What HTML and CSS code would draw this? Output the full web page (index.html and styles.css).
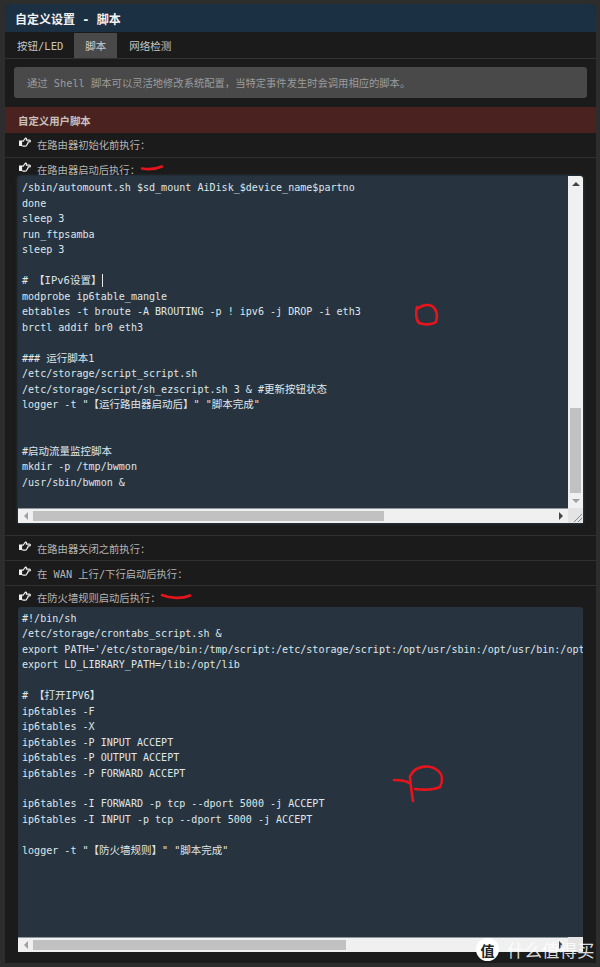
FILE: index.html
```html
<!DOCTYPE html>
<html lang="zh-CN">
<head>
<meta charset="utf-8">
<title>自定义设置 - 脚本</title>
<link rel="stylesheet" href="styles.css">
</head>
<body>
<main class="panel">
  <header class="panel-head">自定义设置 - 脚本</header>
  <nav class="tabs">
    <a class="tab tab-first">按钮/LED</a>
    <a class="tab tab-active">脚本</a>
    <a class="tab">网络检测</a>
  </nav>
  <div class="alert-wrap">
    <div class="alert">通过 Shell 脚本可以灵活地修改系统配置，当特定事件发生时会调用相应的脚本。</div>
  </div>
  <div class="section-title">自定义用户脚本</div>

  <div class="row row-first">
    <div class="label"><svg class="hand"><use href="#hand"/></svg>在路由器初始化前执行：</div>
  </div>

  <div class="row row-open row-open-a">
    <div class="label"><svg class="hand"><use href="#hand"/></svg>在路由器启动后执行：</div>
    <div class="editor editor-a">
      <pre class="code">/sbin/automount.sh $sd_mount AiDisk_$device_name$partno
done
sleep 3
run_ftpsamba
sleep 3

# <span class="zh">【IPv6设置】</span><span class="caret"></span>
modprobe ip6table_mangle
ebtables -t broute -A BROUTING -p ! ipv6 -j DROP -i eth3
brctl addif br0 eth3

### <span class="zh">运行脚本</span>1
/etc/storage/script_script.sh
/etc/storage/script/sh_ezscript.sh 3 &amp; #<span class="zh">更新按钮状态</span>
logger -t "<span class="zh">【运行路由器启动后】</span>" "<span class="zh">脚本完成</span>"


#<span class="zh">启动流量监控脚本</span>
mkdir -p /tmp/bwmon
/usr/sbin/bwmon &amp;</pre>
      <div class="vbar">
        <span class="arrow arrow-up"></span>
        <div class="vtrack"><span class="vthumb"></span></div>
        <span class="arrow arrow-down"></span>
      </div>
      <div class="hbar">
        <span class="arrow arrow-left"></span>
        <div class="htrack"><span class="hthumb hthumb-a"></span></div>
        <span class="arrow arrow-right"></span>
      </div>
      <div class="corner"><svg class="grip" viewBox="0 0 10 10"><path d="M1 9 9 1M5 9 9 5"/></svg></div>
    </div>
  </div>

  <div class="row">
    <div class="label"><svg class="hand"><use href="#hand"/></svg>在路由器关闭之前执行：</div>
  </div>
  <div class="row">
    <div class="label"><svg class="hand"><use href="#hand"/></svg>在 WAN 上行/下行启动后执行：</div>
  </div>

  <div class="row row-open row-open-b">
    <div class="label"><svg class="hand"><use href="#hand"/></svg>在防火墙规则启动后执行：</div>
    <div class="editor editor-b">
      <pre class="code code-wide">#!/bin/sh
/etc/storage/crontabs_script.sh &amp;
export PATH='/etc/storage/bin:/tmp/script:/etc/storage/script:/opt/usr/sbin:/opt/usr/bin:/opt
export LD_LIBRARY_PATH=/lib:/opt/lib

# <span class="zh">【打开</span>IPV6<span class="zh">】</span>
ip6tables -F
ip6tables -X
ip6tables -P INPUT ACCEPT
ip6tables -P OUTPUT ACCEPT
ip6tables -P FORWARD ACCEPT

ip6tables -I FORWARD -p tcp --dport 5000 -j ACCEPT
ip6tables -I INPUT -p tcp --dport 5000 -j ACCEPT

logger -t "<span class="zh">【防火墙规则】</span>" "<span class="zh">脚本完成</span>"</pre>
      <div class="hbar">
        <span class="arrow arrow-left"></span>
        <div class="htrack"><span class="hthumb hthumb-b"></span></div>
        <span class="arrow arrow-right"></span>
      </div>
      <div class="corner"></div>
    </div>
  </div>
</main>

<svg class="defs" aria-hidden="true">
  <symbol id="hand" viewBox="0 0 12 10">
    <path d="M0 3.500h2.500v5.500H0z" fill="#efefef"/>
    <path d="M2.500 4.200H4C5 3.300 5.600 1.700 6.600 1.100c1.100 0 1.100 1.200.6 2h3.300c1.200 0 1.200 1.800 0 1.800H9c.3.800 0 1.500-.5 1.700 0 .8-.3 1.300-.9 1.500 0 .7-.5 1.100-1.100 1.100H4.300c-.6 0-1.200-.5-1.800-.7z" fill="#1b1b1b" stroke="#efefef" stroke-width="1.200" stroke-linejoin="round"/>
  </symbol>
</svg>

<svg class="mark mark-dash-a" viewBox="0 0 24 6"><path d="M2 3.500c6 1 13 1 20-2"/></svg>
<svg class="mark mark-dash-b" viewBox="0 0 32 8"><path d="M2 2c8 3.500 20 4 28 .5"/></svg>
<svg class="mark mark-o" viewBox="0 0 26 24"><path d="M3 4C1.500 9 2 17 5 20c5 2 13 2 17-1 2-6 1-13-4-16C13 1 8 2 3 6"/></svg>
<svg class="mark mark-p" viewBox="0 0 54 40"><path d="M1 17c5 0 11 0 15 3M17 13c0 7 2 17 3 25M18 12C22 3 36 1 44 7c6 4 6 11 3 17-7 3-17 3-25 2"/></svg>

<div class="watermark">
  <span class="wm-logo">值</span>
  <span class="wm-text">什么值得买</span>
</div>
</body>
</html>
```
FILE: styles.css
```css
* { box-sizing: border-box; }
html, body { margin: 0; height: 967px; overflow: hidden; }
body {
  position: relative;
  background: #2d2d2d;
  padding: 4px 4px 0 5px;
  font-family: "DejaVu Sans Mono", "Noto Sans CJK SC", monospace;
  font-size: 10px;
  color: #b5b5b5;
}
.panel { background: #1b1b1b; border-radius: 6px 6px 0 0; height: 959px; }
.panel-head {
  height: 28px;
  background: #1c3044;
  border-radius: 6px 6px 0 0;
  padding: 0 10px;
  display: flex;
  align-items: center;
  color: #f2f2f2;
  font-weight: 700;
  font-size: 12px;
  white-space: pre;
}
.tabs {
  height: 27px;
  display: flex;
  padding: 1px 0 0 0;
  border-bottom: 1px solid #333;
  font-size: 10.5px;
}
.tab {
  display: flex;
  align-items: center;
  padding: 0 12px;
  color: #c4c4c4;
}
.tab-first { padding-right: 11px; }
.tab-active { background: #494949; padding: 0 11px; color: #d0d0d0; }
.alert-wrap { padding: 8px 9px 9px; }
.alert {
  height: 31px;
  background: #494949;
  border-radius: 3px;
  padding: 0 13px;
  display: flex;
  align-items: center;
  color: #9c9c9c;
  font-size: 10.3px;
  white-space: pre;
}
.section-title {
  height: 26px;
  background: #4a2320;
  padding: 0 13px;
  display: flex;
  align-items: center;
  font-weight: 700;
  font-size: 10.4px;
  color: #c9c0bd;
}
.row { border-bottom: 1px solid #303030; height: 25px; padding: 0 14px; }
.label { height: 24px; display: flex; align-items: center; color: #b5b5b5; font-size: 10.3px; white-space: pre; }
.row-first .label { padding-bottom: 2px; }
.hand { width: 12px; height: 10px; margin-right: 6px; position: relative; top: -2px; flex: none; }
.row-open { height: auto; padding: 0 13px; }
.row-open .label { padding-left: 1px; }
.row-open-a { height: 378px; }
.row-open-a .label { height: 18px; padding-top: 4px; }
.row-open-b { border-bottom: 0; }
.row-open-b .label { height: 21px; padding-top: 2px; }
.editor {
  display: grid;
  grid-template-columns: 550px 15px;
  grid-template-rows: 1fr 15px;
  width: 565px;
  background: #273440;
  border-radius: 3px 3px 0 0;
  overflow: hidden;
}
.editor-a { height: 347px; box-shadow: 0 0 3px #31506a; }
.editor-b { height: 345px; }
.code {
  margin: 0;
  padding: 4px 0 0 4px;
  overflow: hidden;
  font: inherit;
  font-size: 10.05px;
  line-height: 15.5px;
  color: #dfe6ea;
  white-space: pre;
}
.code-wide { grid-column: 1 / 3; line-height: 15.45px; }
.zh { display: inline-block; font-size: 10.5px; line-height: 12px; }
.caret { display: inline-block; width: 1px; height: 13px; margin-left: 1px; background: #e8e8e8; vertical-align: -3px; }
.vbar {
  background: #f0f0f0;
  display: flex;
  flex-direction: column;
}
.vtrack { flex: 1; padding: 217px 2px 0; }
.vthumb { display: block; height: 85px; background: #c1c1c1; }
.hbar { background: #f0f0f0; display: flex; align-items: center; border-top: 1px solid #8f979d; }
.htrack { flex: 1; height: 100%; padding: 2px 0; }
.hthumb { display: block; height: 100%; background: #c1c1c1; }
.hthumb-a { width: 351px; }
.hthumb-b { width: 313px; }
.arrow { flex: none; display: flex; align-items: center; justify-content: center; width: 15px; height: 15px; position: relative; }
.arrow::before { content: ""; border: 4px solid transparent; }
.arrow-up::before { border-top: 0; border-bottom-color: #444; }
.arrow-down::before { border-bottom: 0; border-top-color: #a0a0a0; }
.arrow-left::before { border-left: 0; border-right-color: #a0a0a0; }
.arrow-right::before { border-right: 0; border-left-color: #444; }
.corner { background: #e4e4e4; display: flex; align-items: flex-end; justify-content: flex-end; }
.grip { width: 10px; height: 10px; }
.grip path { fill: none; stroke: #888; stroke-width: 1; }
.defs { position: absolute; width: 0; height: 0; }
.mark { position: absolute; overflow: visible; }
.mark path { fill: none; stroke: #e8141c; stroke-width: 2.6; stroke-linecap: round; stroke-linejoin: round; }
.mark-dash-a { left: 140px; top: 165px; width: 24px; height: 6px; }
.mark-dash-b { left: 160px; top: 593px; width: 32px; height: 8px; }
.mark-o { left: 414px; top: 303px; width: 26px; height: 24px; }
.mark-p { left: 393px; top: 763px; width: 54px; height: 40px; }
.watermark {
  position: absolute;
  left: 476px;
  top: 938px;
  display: flex;
  align-items: center;
  gap: 8px;
}
.wm-logo {
  width: 23px;
  height: 23px;
  border-radius: 50%;
  background: #fff;
  color: #222;
  display: flex;
  align-items: center;
  justify-content: center;
  font: 700 14px "Noto Sans CJK SC", sans-serif;
}
.wm-text { font: 400 17.5px/23px "Noto Sans CJK SC", sans-serif; color: rgba(255,255,255,.85); white-space: nowrap; }
```
